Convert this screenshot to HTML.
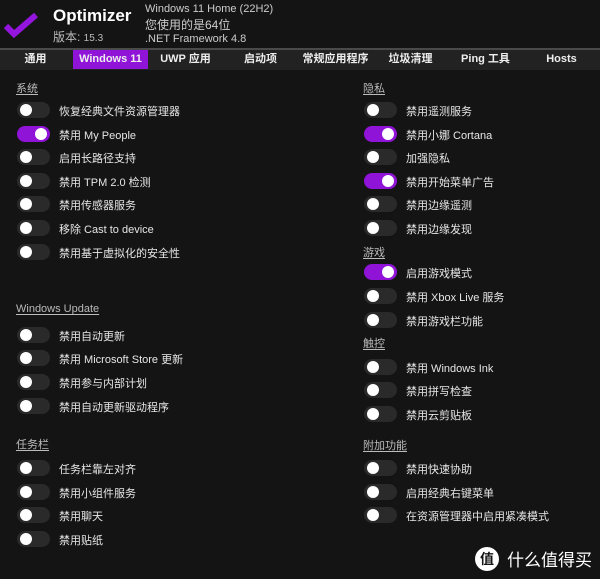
<!DOCTYPE html>
<html><head><meta charset="utf-8"><style>
*{margin:0;padding:0;box-sizing:border-box}
body{width:600px;height:579px;background:#141414;color:#e8e8e8;font-family:"Liberation Sans","Noto Sans CJK SC",sans-serif;position:relative;overflow:hidden;font-size:11px}
.a{position:absolute;white-space:nowrap}
.sep{position:absolute;left:0;top:48px;width:600px;height:2px;background:#4a4a4a}
.tabs{position:absolute;left:0;top:50px;width:600px;height:20px;background:#222}
.tab{position:absolute;top:0;height:19px;line-height:19px;width:75px;text-align:center;font-size:11px;font-weight:bold;color:#eee}
.tab.on{background:#9013d8}
.h{position:absolute;font-size:11px;color:#bbb;text-decoration:underline;text-underline-offset:2px}
.t{position:absolute;width:33px;height:16px;border-radius:8px;background:#2a2a2a}
.t::after{content:"";position:absolute;top:2px;left:3px;width:12px;height:12px;border-radius:50%;background:#fff}
.t.on{background:#9013d8}
.t.on::after{left:18px}
.l{position:absolute;font-size:11px;color:#e6e6e6;white-space:nowrap}
</style></head><body>
<svg class="a" style="left:0;top:0" width="44" height="44" viewBox="0 0 44 44"><path d="M6 26 L14 34 L36 15" stroke="#9416de" stroke-width="6" fill="none" stroke-linejoin="miter" stroke-linecap="butt"/></svg>
<div class="a" style="left:53px;top:6px;font-size:17px;font-weight:bold;color:#fff">Optimizer</div>
<div class="a" style="left:53px;top:28px;font-size:12px;color:#bbb">版本: <span style="font-size:10px">15.3</span></div>
<div class="a" style="left:145px;top:3px;font-size:11px;color:#ccc">Windows 11 Home (22H2)</div>
<div class="a" style="left:145px;top:16px;font-size:12px;color:#ccc">您使用的是64位</div>
<div class="a" style="left:145px;top:33px;font-size:11px;color:#ccc">.NET Framework 4.8</div>
<div class="sep"></div>
<div class="tabs">
<div class="tab" style="left:-2px">通用</div>
<div class="tab on" style="left:73px">Windows 11</div>
<div class="tab" style="left:148px">UWP 应用</div>
<div class="tab" style="left:223px">启动项</div>
<div class="tab" style="left:298px">常规应用程序</div>
<div class="tab" style="left:373px">垃圾清理</div>
<div class="tab" style="left:448px">Ping 工具</div>
<div class="tab" style="left:524px">Hosts</div>
</div>

<div class="h" style="left:16px;top:80px">系统</div>
<div class="h" style="left:16px;top:303px">Windows Update</div>
<div class="h" style="left:16px;top:436px">任务栏</div>
<div class="h" style="left:363px;top:80px">隐私</div>
<div class="h" style="left:363px;top:244px">游戏</div>
<div class="h" style="left:363px;top:335px">触控</div>
<div class="h" style="left:363px;top:437px">附加功能</div>

<div class="t" style="left:17px;top:102px"></div><div class="l" style="left:59px;top:103px">恢复经典文件资源管理器</div>
<div class="t on" style="left:17px;top:126px"></div><div class="l" style="left:59px;top:127px">禁用 My People</div>
<div class="t" style="left:17px;top:149px"></div><div class="l" style="left:59px;top:150px">启用长路径支持</div>
<div class="t" style="left:17px;top:173px"></div><div class="l" style="left:59px;top:174px">禁用 TPM 2.0 检测</div>
<div class="t" style="left:17px;top:196px"></div><div class="l" style="left:59px;top:197px">禁用传感器服务</div>
<div class="t" style="left:17px;top:220px"></div><div class="l" style="left:59px;top:221px">移除 Cast to device</div>
<div class="t" style="left:17px;top:244px"></div><div class="l" style="left:59px;top:245px">禁用基于虚拟化的安全性</div>

<div class="t" style="left:17px;top:327px"></div><div class="l" style="left:59px;top:328px">禁用自动更新</div>
<div class="t" style="left:17px;top:350px"></div><div class="l" style="left:59px;top:351px">禁用 Microsoft Store 更新</div>
<div class="t" style="left:17px;top:374px"></div><div class="l" style="left:59px;top:375px">禁用参与内部计划</div>
<div class="t" style="left:17px;top:398px"></div><div class="l" style="left:59px;top:399px">禁用自动更新驱动程序</div>

<div class="t" style="left:17px;top:460px"></div><div class="l" style="left:59px;top:461px">任务栏靠左对齐</div>
<div class="t" style="left:17px;top:484px"></div><div class="l" style="left:59px;top:485px">禁用小组件服务</div>
<div class="t" style="left:17px;top:507px"></div><div class="l" style="left:59px;top:508px">禁用聊天</div>
<div class="t" style="left:17px;top:531px"></div><div class="l" style="left:59px;top:532px">禁用贴纸</div>

<div class="t" style="left:364px;top:102px"></div><div class="l" style="left:406px;top:103px">禁用遥测服务</div>
<div class="t on" style="left:364px;top:126px"></div><div class="l" style="left:406px;top:127px">禁用小娜 Cortana</div>
<div class="t" style="left:364px;top:149px"></div><div class="l" style="left:406px;top:150px">加强隐私</div>
<div class="t on" style="left:364px;top:173px"></div><div class="l" style="left:406px;top:174px">禁用开始菜单广告</div>
<div class="t" style="left:364px;top:196px"></div><div class="l" style="left:406px;top:197px">禁用边缘遥测</div>
<div class="t" style="left:364px;top:220px"></div><div class="l" style="left:406px;top:221px">禁用边缘发现</div>

<div class="t on" style="left:364px;top:264px"></div><div class="l" style="left:406px;top:265px">启用游戏模式</div>
<div class="t" style="left:364px;top:288px"></div><div class="l" style="left:406px;top:289px">禁用 Xbox Live 服务</div>
<div class="t" style="left:364px;top:312px"></div><div class="l" style="left:406px;top:313px">禁用游戏栏功能</div>

<div class="t" style="left:364px;top:359px"></div><div class="l" style="left:406px;top:360px">禁用 Windows Ink</div>
<div class="t" style="left:364px;top:382px"></div><div class="l" style="left:406px;top:383px">禁用拼写检查</div>
<div class="t" style="left:364px;top:406px"></div><div class="l" style="left:406px;top:407px">禁用云剪贴板</div>

<div class="t" style="left:364px;top:460px"></div><div class="l" style="left:406px;top:461px">禁用快速协助</div>
<div class="t" style="left:364px;top:484px"></div><div class="l" style="left:406px;top:485px">启用经典右键菜单</div>
<div class="t" style="left:364px;top:507px"></div><div class="l" style="left:406px;top:508px">在资源管理器中启用紧凑模式</div>

<div class="a" style="left:475px;top:547px;width:24px;height:24px;border-radius:50%;background:#fff;color:#141414;font-size:14px;font-weight:bold;text-align:center;line-height:24px">值</div>
<div class="a" style="left:507px;top:546px;font-size:17px;color:#fff">什么值得买</div>
</body></html>
